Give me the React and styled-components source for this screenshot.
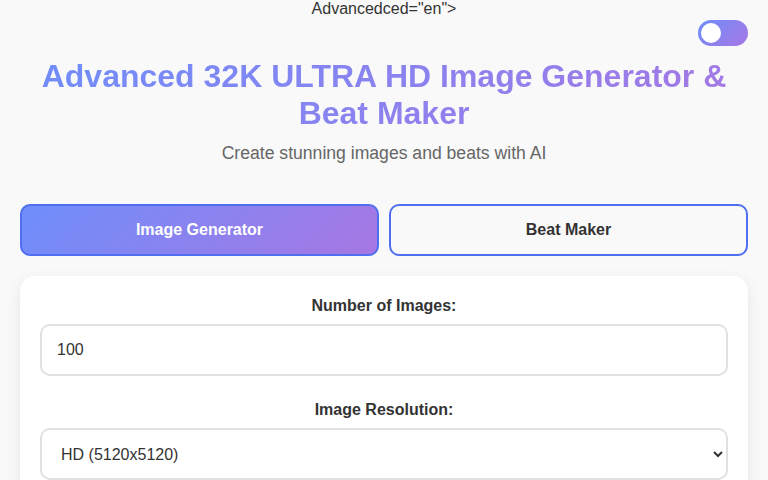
import React, { useState } from "react";
import styled, { createGlobalStyle } from "styled-components";

const Global = createGlobalStyle`
  html, body { margin: 0; padding: 0; }
  body {
    background: #f9f9f9;
    font-family: "Liberation Sans", Arial, sans-serif;
    color: #333;
    text-align: center;
  }
  * { box-sizing: border-box; }
`;

const Stray = styled.div`
  font-size: 16px;
  line-height: 18px;
  height: 18px;
  color: #333;
`;

const Container = styled.div`
  position: relative;
  padding: 0 20px 20px;
`;

const Toggle = styled.button`
  position: absolute;
  top: 2px;
  right: 20px;
  width: 50px;
  height: 26px;
  border: none;
  border-radius: 13px;
  padding: 0;
  background: linear-gradient(135deg, #6e8efb, #a777e3);
  cursor: pointer;
`;

const Knob = styled.span`
  position: absolute;
  top: 3px;
  left: ${(p) => (p.$on ? "27px" : "3px")};
  width: 20px;
  height: 20px;
  border-radius: 50%;
  background: #fff;
`;

const Header = styled.header`
  padding-top: 40px;
  margin-bottom: 40px;
`;

const Title = styled.h1`
  margin: 0 0 11px;
  font-size: 32px;
  line-height: 37px;
  font-weight: 700;
  background: linear-gradient(135deg, #6e8efb, #a777e3);
  -webkit-background-clip: text;
  background-clip: text;
  color: transparent;
`;

const Subtitle = styled.p`
  margin: 0;
  font-size: 17.6px;
  line-height: 21px;
  color: #666;
`;

const Tabs = styled.div`
  display: grid;
  grid-template-columns: 1fr 1fr;
  gap: 10px;
  margin-bottom: 20px;
`;

const Tab = styled.button`
  height: 52px;
  border: 2px solid #4f6ff0;
  border-radius: 10px;
  font-family: "Liberation Sans", Arial, sans-serif;
  font-size: 16px;
  font-weight: 700;
  cursor: pointer;
  color: ${(p) => (p.$active ? "#fff" : "#333")};
  background: ${(p) =>
    p.$active ? "linear-gradient(135deg, #6e8efb, #a777e3)" : "transparent"};
`;

const Card = styled.section`
  background: #fff;
  border-radius: 15px;
  padding: 20px;
  box-shadow: 0 5px 15px rgba(0, 0, 0, 0.08);
`;

const Group = styled.div`
  margin-bottom: 24px;
`;

const Label = styled.label`
  display: block;
  padding-top: 1px;
  font-size: 16px;
  line-height: 18px;
  font-weight: 700;
  color: #333;
  margin-bottom: 9px;
`;

const Input = styled.input`
  display: block;
  width: 100%;
  height: 52px;
  padding: 15px;
  border: 2px solid #e0e0e0;
  border-radius: 10px;
  font-family: "Liberation Sans", Arial, sans-serif;
  font-size: 16px;
  color: #333;
  background: #fff;
  outline: none;
`;

const Select = styled.select`
  display: block;
  width: 100%;
  height: 52px;
  padding: 0 15px;
  border: 2px solid #e0e0e0;
  border-radius: 10px;
  font-family: "Liberation Sans", Arial, sans-serif;
  font-size: 16px;
  color: #333;
  background: #fff;
`;

export default function App() {
  const [tab, setTab] = useState("image");
  const [dark, setDark] = useState(false);
  return (
    <>
      <Global />
      <Stray>Advancedced="en"&gt;</Stray>
      <Container>
        <Toggle aria-label="Toggle theme" onClick={() => setDark(!dark)}>
          <Knob $on={dark} />
        </Toggle>
        <Header>
          <Title>Advanced 32K ULTRA HD Image Generator &amp; Beat Maker</Title>
          <Subtitle>Create stunning images and beats with AI</Subtitle>
        </Header>
        <Tabs>
          <Tab $active={tab === "image"} onClick={() => setTab("image")}>
            Image Generator
          </Tab>
          <Tab $active={tab === "beat"} onClick={() => setTab("beat")}>
            Beat Maker
          </Tab>
        </Tabs>
        <Card>
          <Group>
            <Label htmlFor="num">Number of Images:</Label>
            <Input id="num" type="number" defaultValue="100" />
          </Group>
          <Group>
            <Label htmlFor="res">Image Resolution:</Label>
            <Select id="res" defaultValue="hd">
              <option value="hd">HD (5120x5120)</option>
              <option value="uhd">Ultra HD (16384x16384)</option>
              <option value="32k">32K (32768x32768)</option>
            </Select>
          </Group>
        </Card>
      </Container>
    </>
  );
}
